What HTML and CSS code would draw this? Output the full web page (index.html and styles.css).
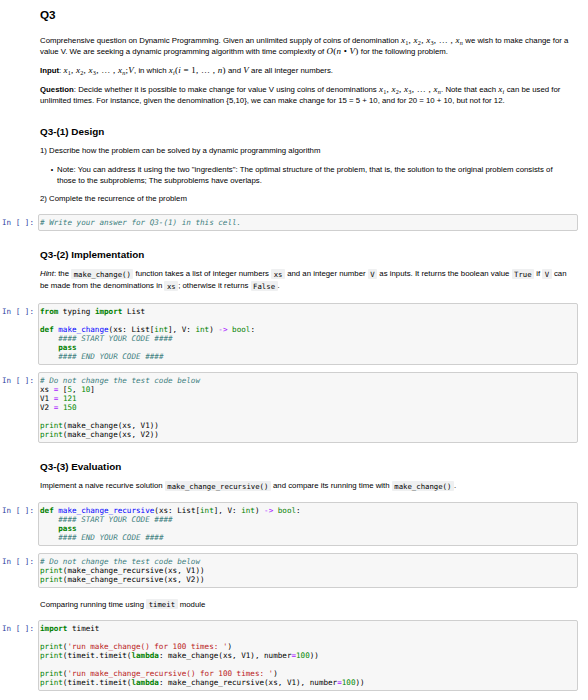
FILE: index.html
```html
<!DOCTYPE html>
<html>
<head>
<meta charset="utf-8">
<link rel="stylesheet" href="styles.css">
</head>
<body>
<div class="nb">

  <div class="cell md first">
    <div class="prompt"></div>
    <div class="content">
      <h2 class="title">Q3</h2>
      <p class="fixed">Comprehensive question on Dynamic Programming. Given an unlimited supply of coins of denomination <span class="m"><i>x</i><sub>1</sub>, <i>x</i><sub>2</sub>, <i>x</i><sub>3</sub>, … , <i>x<sub>n</sub></i></span> we wish to make change for a<br>value V. We are seeking a dynamic programming algorithm with time complexity of <span class="m"><i>O</i>(<i>n</i> • <i>V</i>)</span> for the following problem.</p>
      <p><b>Input</b>: <span class="m"><i>x</i><sub>1</sub>, <i>x</i><sub>2</sub>, <i>x</i><sub>3</sub>, … , <i>x<sub>n</sub></i>;<i>V</i></span>, in which <span class="m"><i>x<sub>i</sub></i>(<i>i</i> = 1, … , <i>n</i>)</span> and <span class="m"><i>V</i></span> are all integer numbers.</p>
      <p class="fixed"><b>Question</b>: Decide whether it is possible to make change for value V using coins of denominations <span class="m"><i>x</i><sub>1</sub>, <i>x</i><sub>2</sub>, <i>x</i><sub>3</sub>, … , <i>x<sub>n</sub></i></span>. Note that each <span class="m"><i>x<sub>i</sub></i></span> can be used for<br>unlimited times. For instance, given the denomination {5,10}, we can make change for 15 = 5 + 10, and for 20 = 10 + 10, but not for 12.</p>
      <h3 class="h-gap">Q3-(1) Design</h3>
      <p>1) Describe how the problem can be solved by a dynamic programming algorithm</p>
      <ul>
        <li class="fixed">Note: You can address it using the two "ingredients": The optimal structure of the problem, that is, the solution to the original problem consists of<br>those to the subproblems; The subproblems have overlaps.</li>
      </ul>
      <p>2) Complete the recurrence of the problem</p>
    </div>
  </div>

  <div class="cell code">
    <div class="prompt">In&nbsp;[&nbsp;]:</div>
    <pre class="input"><span class="c"># Write your answer for Q3-(1) in this cell.</span></pre>
  </div>

  <div class="cell md">
    <div class="prompt"></div>
    <div class="content">
      <h3>Q3-(2) Implementation</h3>
      <p class="p-code fixed"><i>Hint</i>: the <code>make_change()</code> function takes a list of integer numbers <code>xs</code> and an integer number <code>V</code> as inputs. It returns the boolean value <code>True</code> if <code>V</code> can<br>be made from the denominations in <code>xs</code>; otherwise it returns <code>False</code>.</p>
    </div>
  </div>

  <div class="cell code">
    <div class="prompt">In&nbsp;[&nbsp;]:</div>
    <pre class="input"><span class="k">from</span> typing <span class="k">import</span> List

<span class="k">def</span> <span class="d">make_change</span>(xs: List[<span class="b">int</span>], V: <span class="b">int</span>) <span class="o">-&gt;</span> <span class="b">bool</span>:
    <span class="c">#### START YOUR CODE ####</span>
    <span class="k">pass</span>
    <span class="c">#### END YOUR CODE ####</span></pre>
  </div>

  <div class="cell code">
    <div class="prompt">In&nbsp;[&nbsp;]:</div>
    <pre class="input"><span class="c"># Do not change the test code below</span>
xs <span class="o">=</span> [<span class="n">5</span>, <span class="n">10</span>]
V1 <span class="o">=</span> <span class="n">121</span>
V2 <span class="o">=</span> <span class="n">150</span>

<span class="b">print</span>(make_change(xs, V1))
<span class="b">print</span>(make_change(xs, V2))</pre>
  </div>

  <div class="cell md">
    <div class="prompt"></div>
    <div class="content">
      <h3>Q3-(3) Evaluation</h3>
      <p>Implement a naive recurive solution <code>make_change_recursive()</code> and compare its running time with <code>make_change()</code>.</p>
    </div>
  </div>

  <div class="cell code">
    <div class="prompt">In&nbsp;[&nbsp;]:</div>
    <pre class="input"><span class="k">def</span> <span class="d">make_change_recursive</span>(xs: List[<span class="b">int</span>], V: <span class="b">int</span>) <span class="o">-&gt;</span> <span class="b">bool</span>:
    <span class="c">#### START YOUR CODE ####</span>
    <span class="k">pass</span>
    <span class="c">#### END YOUR CODE ####</span></pre>
  </div>

  <div class="cell code">
    <div class="prompt">In&nbsp;[&nbsp;]:</div>
    <pre class="input"><span class="c"># Do not change the test code below</span>
<span class="b">print</span>(make_change_recursive(xs, V1))
<span class="b">print</span>(make_change_recursive(xs, V2))</pre>
  </div>

  <div class="cell md">
    <div class="prompt"></div>
    <div class="content">
      <p>Comparing running time using <code>timeit</code> module</p>
    </div>
  </div>

  <div class="cell code">
    <div class="prompt">In&nbsp;[&nbsp;]:</div>
    <pre class="input"><span class="k">import</span> timeit

<span class="b">print</span>(<span class="s">'run make_change() for 100 times: '</span>)
<span class="b">print</span>(timeit.timeit(<span class="k">lambda</span>: make_change(xs, V1), number<span class="o">=</span><span class="n">100</span>))

<span class="b">print</span>(<span class="s">'run make_change_recursive() for 100 times: '</span>)
<span class="b">print</span>(timeit.timeit(<span class="k">lambda</span>: make_change_recursive(xs, V1), number<span class="o">=</span><span class="n">100</span>))</pre>
  </div>

</div>
</body>
</html>
```

FILE: styles.css
```css
html, body {
  margin: 0;
  padding: 0;
  background: #fff;
}
body {
  font-family: "Liberation Sans", Arial, sans-serif;
  font-size: 7.8px;
  line-height: 11px;
  color: #000;
}
.nb {
  padding: 8px 10px 8px 2px;
}
.cell {
  display: grid;
  grid-template-columns: 36px 1fr;
}
.cell.md {
  margin: 10.5px 0;
}
.cell.md.first {
  margin-top: 0;
}
.cell.code {
  margin: 7.5px 0;
}
.prompt {
  font-family: "DejaVu Sans Mono", "Liberation Mono", monospace;
  font-size: 7.6px;
  line-height: 9px;
  color: #303f9f;
  padding-top: 4px;
  white-space: nowrap;
}
.content {
  padding-left: 2px;
  min-width: 0;
}
.input {
  margin: 0;
  background: #f7f7f7;
  border: 1px solid #cfcfcf;
  border-radius: 2px;
  padding: 3px 1px;
  font-family: "DejaVu Sans Mono", "Liberation Mono", monospace;
  font-size: 7.6px;
  line-height: 9px;
  color: #000;
  white-space: pre;
  overflow: hidden;
}
.k { color: #008000; font-weight: bold; }
.b { color: #008000; }
.d { color: #0000ff; }
.c { color: #408080; font-style: italic; }
.n { color: #080; }
.o { color: #aa22ff; }
.s { color: #ba2121; }

h2, h3 {
  margin: 0;
  font-weight: bold;
}
h2.title {
  font-size: 11.7px;
  line-height: 14px;
  margin-bottom: 12.5px;
}
h3 {
  font-size: 9.9px;
  line-height: 12px;
  margin-top: 7px;
  margin-bottom: 7.5px;
}
h3.h-gap {
  margin-top: 20.5px;
  margin-bottom: 6.5px;
}
p {
  margin: 0 0 8px;
}
.fixed {
  white-space: nowrap;
}
.content > :last-child {
  margin-bottom: 0;
}
.p-code {
  line-height: 12px;
}
ul {
  margin: 0 0 7px;
  padding-left: 17px;
  list-style: disc;
}
li::marker {
  content: "•  ";
  font-size: 7px;
}
.m {
  font-family: "Liberation Serif", "Times New Roman", serif;
  font-size: 9px;
  letter-spacing: 0.25px;
  line-height: 0;
}
.m sub {
  font-size: 6.2px;
  line-height: 0;
  vertical-align: -1.5px;
}
code {
  font-family: "DejaVu Sans Mono", "Liberation Mono", monospace;
  font-size: 7.3px;
  background: #eff0f1;
  padding: 0.5px 2.5px;
  border-radius: 1px;
  line-height: 0;
}
```
